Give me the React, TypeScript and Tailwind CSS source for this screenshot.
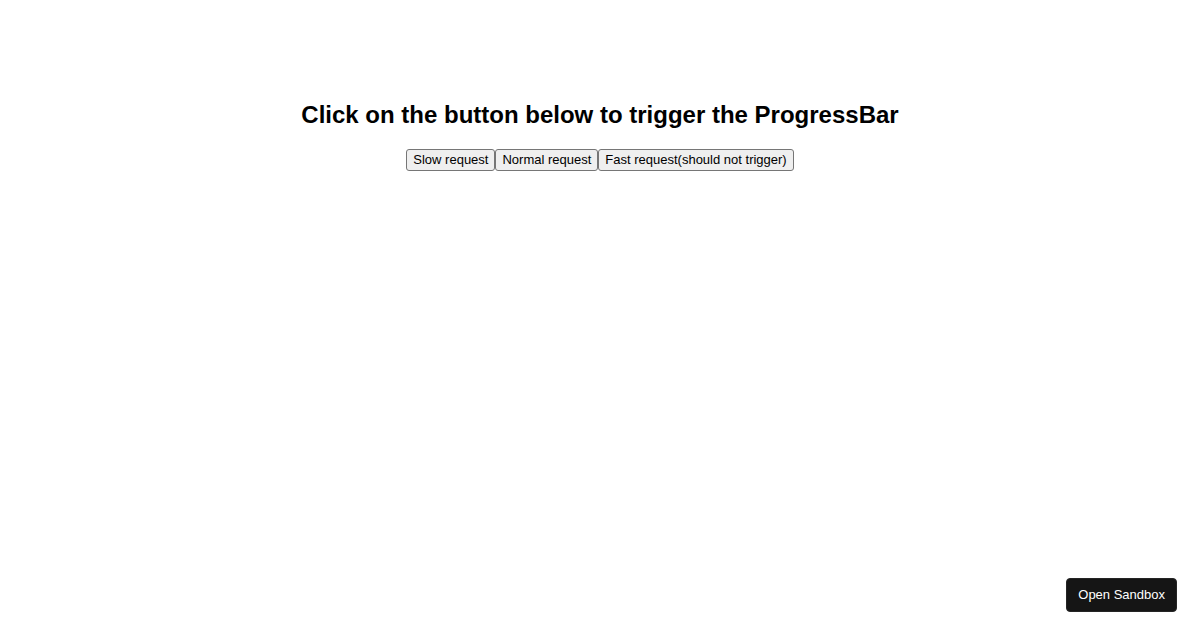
import { useEffect, useState } from "react";

const requests = [
  { label: "Slow request", delay: 5000 },
  { label: "Normal request", delay: 1500 },
  { label: "Fast request(should not trigger)", delay: 100 },
];

// Requests that finish sooner than this never show the bar
const THRESHOLD = 250;

function ProgressBar({ loading }: { loading: boolean }) {
  const [visible, setVisible] = useState(false);

  useEffect(() => {
    if (!loading) {
      setVisible(false);
      return;
    }
    const timer = setTimeout(() => setVisible(true), THRESHOLD);
    return () => clearTimeout(timer);
  }, [loading]);

  if (!visible) return null;

  return (
    <div className="fixed inset-x-0 top-0 h-1 animate-pulse bg-blue-500" />
  );
}

export default function App() {
  const [pending, setPending] = useState(0);

  const sendRequest = (delay: number) => {
    setPending((count) => count + 1);
    setTimeout(() => setPending((count) => count - 1), delay);
  };

  return (
    <div className="min-h-screen bg-white font-['Liberation_Sans',Arial,sans-serif] text-black">
      <ProgressBar loading={pending > 0} />
      <main className="px-2 pt-25 text-center">
        <h2 className="mb-5 text-2xl leading-[29px] font-bold">
          Click on the button below to trigger the ProgressBar
        </h2>
        <div className="flex flex-wrap justify-center">
          {requests.map((request) => (
            <button
              key={request.label}
              onClick={() => sendRequest(request.delay)}
              className="rounded-[3px] border border-[#767676] bg-[#efefef] px-1.5 py-0.5 text-[13px] leading-4 hover:bg-[#e5e5e5]"
            >
              {request.label}
            </button>
          ))}
        </div>
      </main>
      <a
        href="https://codesandbox.io"
        className="fixed right-[23px] bottom-4.5 rounded border border-[#252525] bg-[#151515] px-[11px] py-2 text-[13px] leading-4 text-white"
      >
        Open Sandbox
      </a>
    </div>
  );
}
